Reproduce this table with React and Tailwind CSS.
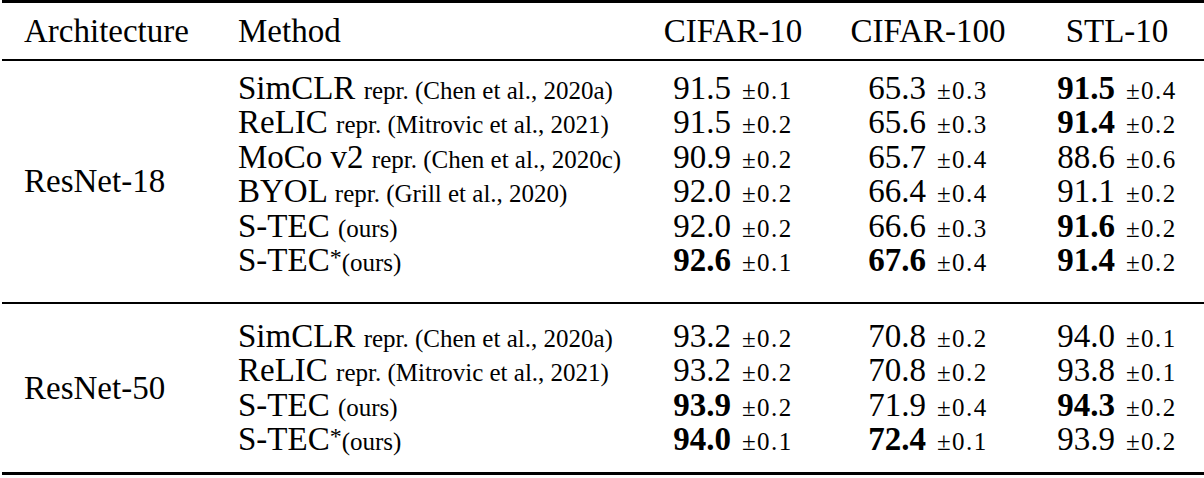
const groups = [
  {
    arch: 'ResNet-18',
    rows: [
      { name: 'SimCLR', note: 'repr. (Chen et al., 2020a)', vals: [['91.5', '0.1'], ['65.3', '0.3'], ['91.5', '0.4', true]] },
      { name: 'ReLIC', note: 'repr. (Mitrovic et al., 2021)', vals: [['91.5', '0.2'], ['65.6', '0.3'], ['91.4', '0.2', true]] },
      { name: 'MoCo v2', note: 'repr. (Chen et al., 2020c)', vals: [['90.9', '0.2'], ['65.7', '0.4'], ['88.6', '0.6']] },
      { name: 'BYOL', note: 'repr. (Grill et al., 2020)', vals: [['92.0', '0.2'], ['66.4', '0.4'], ['91.1', '0.2']] },
      { name: 'S-TEC', note: '(ours)', vals: [['92.0', '0.2'], ['66.6', '0.3'], ['91.6', '0.2', true]] },
      { name: 'S-TEC', star: true, note: '(ours)', vals: [['92.6', '0.1', true], ['67.6', '0.4', true], ['91.4', '0.2', true]] },
    ],
  },
  {
    arch: 'ResNet-50',
    rows: [
      { name: 'SimCLR', note: 'repr. (Chen et al., 2020a)', vals: [['93.2', '0.2'], ['70.8', '0.2'], ['94.0', '0.1']] },
      { name: 'ReLIC', note: 'repr. (Mitrovic et al., 2021)', vals: [['93.2', '0.2'], ['70.8', '0.2'], ['93.8', '0.1']] },
      { name: 'S-TEC', note: '(ours)', vals: [['93.9', '0.2', true], ['71.9', '0.4'], ['94.3', '0.2', true]] },
      { name: 'S-TEC', star: true, note: '(ours)', vals: [['94.0', '0.1', true], ['72.4', '0.1', true], ['93.9', '0.2']] },
    ],
  },
];

function Score({ v, pm, bold }) {
  return (
    <div className="flex items-baseline justify-center">
      <span className={bold ? 'font-bold' : ''}>{v}</span>
      <span className="ml-[11px] text-[25px] tracking-[1.5px]">±{pm}</span>
    </div>
  );
}

function Row({ row }) {
  return (
    <div className="flex h-[34.5px] items-center">
      <div className="w-[402px] whitespace-nowrap">
        <span>{row.name}</span>
        {row.star && <span className="relative -top-[6px] text-[24px]">*</span>}
        {!row.star && ' '}
        <span className="text-[25px]">{row.note}</span>
      </div>
      <div className="w-[186px]"><Score v={row.vals[0][0]} pm={row.vals[0][1]} bold={row.vals[0][2]} /></div>
      <div className="w-[204px]"><Score v={row.vals[1][0]} pm={row.vals[1][1]} bold={row.vals[1][2]} /></div>
      <div className="flex-1"><Score v={row.vals[2][0]} pm={row.vals[2][1]} bold={row.vals[2][2]} /></div>
    </div>
  );
}

export default function App() {
  return (
    <div className="w-[1204px] h-[478px] bg-white pl-[2px] text-black font-['Liberation_Serif','Times_New_Roman',serif] text-[33px] leading-none">
      <div className="h-[3px] bg-black" />

      {/* Header */}
      <div className="flex h-[56px] items-center">
        <div className="w-[236px] pl-[22px]">Architecture</div>
        <div className="w-[402px]">Method</div>
        <div className="w-[186px] text-center">CIFAR-10</div>
        <div className="w-[204px] text-center">CIFAR-100</div>
        <div className="flex-1 text-center">STL-10</div>
      </div>
      <div className="h-[2px] bg-black" />

      {groups.map((g, i) => (
        <div key={g.arch}>
          <div className={`flex ${i === 0 ? 'pt-[10px] pb-[24px]' : 'pt-[15px] pb-[15px]'}`}>
            <div className={`w-[236px] pl-[22px] flex items-center ${i === 0 ? 'pt-[14px]' : ''}`}>{g.arch}</div>
            <div className="flex-1 flex flex-col">
              {g.rows.map((r, j) => (
                <Row key={j} row={r} />
              ))}
            </div>
          </div>
          <div className={i === 0 ? 'h-[2px] bg-black' : 'h-[3px] bg-black'} />
        </div>
      ))}
    </div>
  );
}
